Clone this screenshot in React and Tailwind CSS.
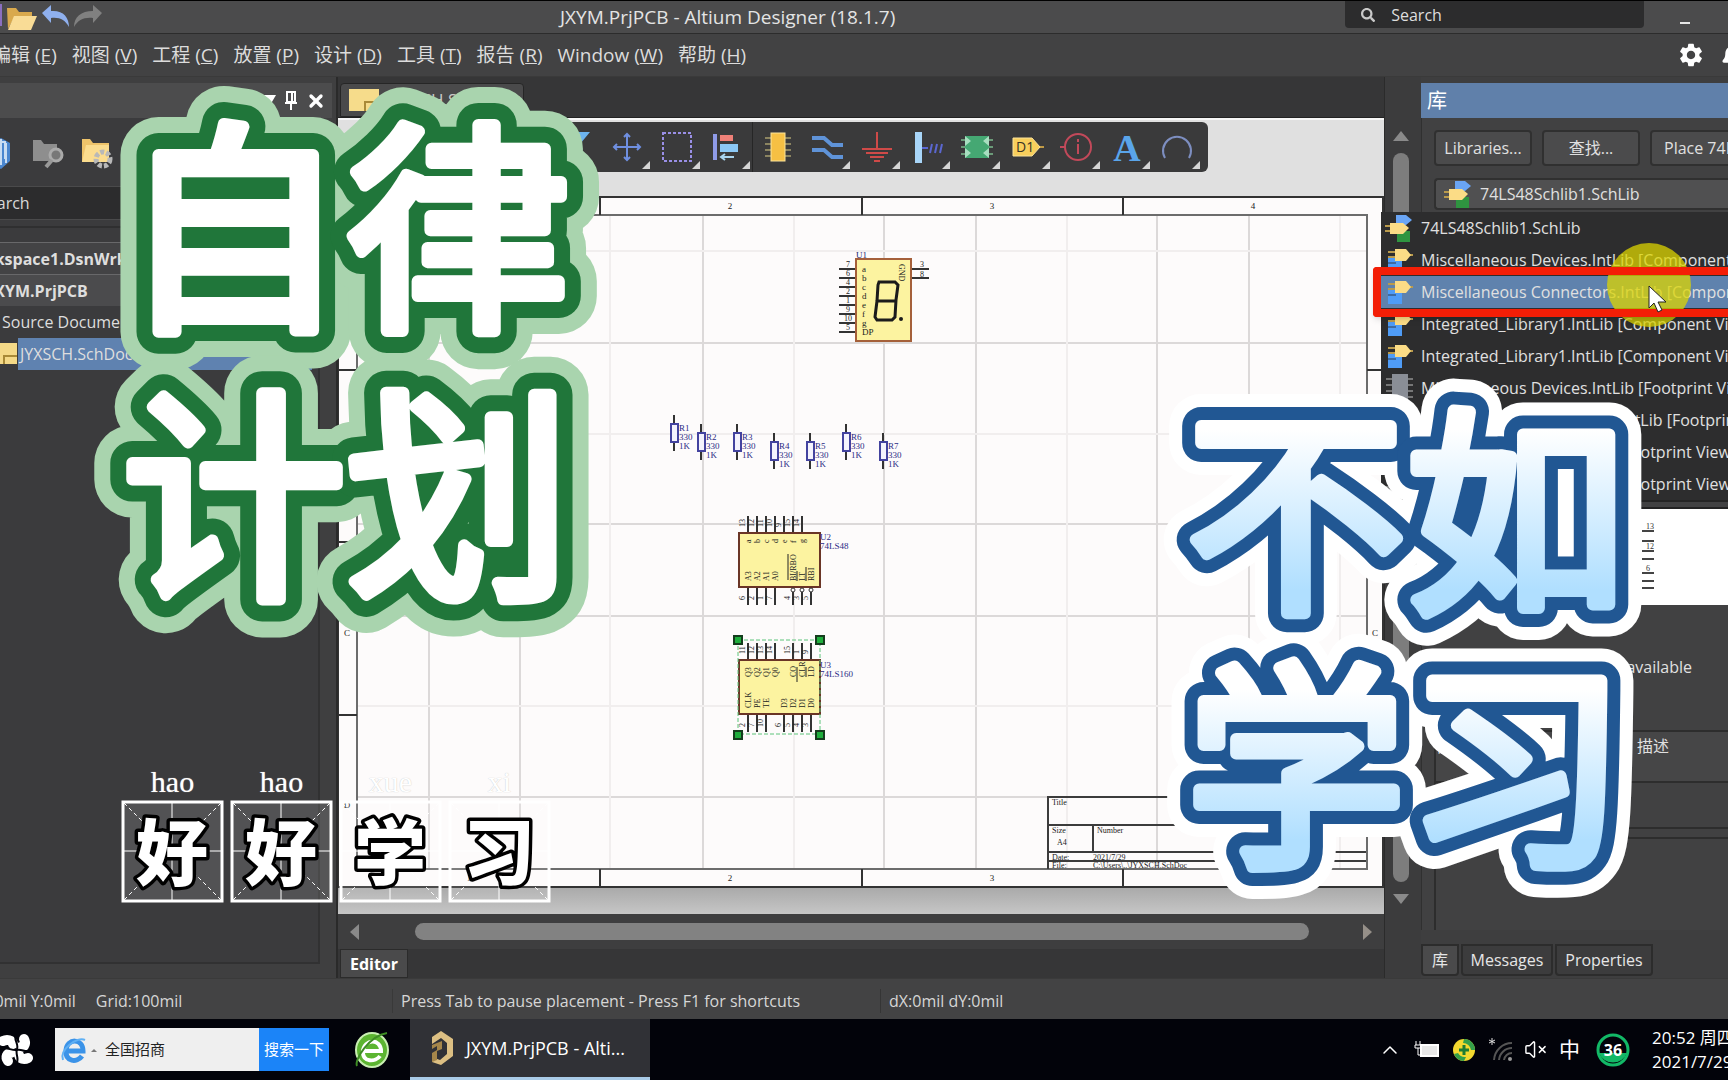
import React from 'react';
import { FaBell, FaSearch } from 'react-icons/fa';
import { MdSettings } from 'react-icons/md';
import { ChevronUp, VolumeX, X } from 'lucide-react';

const MENUS = [
  ['编辑', 'E'],
  ['视图', 'V'],
  ['工程', 'C'],
  ['放置', 'P'],
  ['设计', 'D'],
  ['工具', 'T'],
  ['报告', 'R'],
  ['Window', 'W'],
  ['帮助', 'H'],
];

const LIBRARIES = [
  { name: '74LS48Schlib1.SchLib', kind: 'sch' },
  { name: 'Miscellaneous Devices.IntLib [Component View]', kind: 'int' },
  { name: 'Miscellaneous Connectors.IntLib [Component View]', kind: 'int', active: true },
  { name: 'Integrated_Library1.IntLib [Component View]', kind: 'int' },
  { name: 'Integrated_Library1.IntLib [Component View]', kind: 'int' },
  { name: 'Miscellaneous Devices.IntLib [Footprint View]', kind: 'foot' },
  { name: 'Miscellaneous Connectors.IntLib [Footprint View]', kind: 'foot' },
  { name: 'Integrated_Library1.IntLib [Footprint View]', kind: 'foot' },
  { name: 'Integrated_Library1.IntLib [Footprint View]', kind: 'foot' },
];

const RESISTORS = [
  { id: 'R1', x: 671, y: 424 },
  { id: 'R2', x: 698, y: 433 },
  { id: 'R3', x: 734, y: 433 },
  { id: 'R4', x: 771, y: 442 },
  { id: 'R5', x: 807, y: 442 },
  { id: 'R6', x: 843, y: 433 },
  { id: 'R7', x: 880, y: 442 },
];

const LibIcon = ({ kind }) => (
  <svg width="28" height="30" viewBox="0 0 28 30" className="shrink-0">
    {kind === 'sch' && (
      <>
        <path d="M11 2h10l6 5-6 5H11z" fill="#6aa5f5" />
        <rect x="12" y="18" width="13" height="11" fill="#2f9440" />
        <path d="M0 13h6M0 18h6" stroke="#b99a4c" strokeWidth="2" />
        <path d="M5 10h13l6 5-6 6H5z" fill="#fbdc86" />
      </>
    )}
    {kind === 'int' && (
      <>
        <path d="M3 13h14v14H3z" fill="#4f9cf7" />
        <path d="M3 18h8" stroke="#2d3a50" />
        <path d="M3 7h9M3 12h9M22 10h6" stroke="#b99a4c" strokeWidth="2" />
        <path d="M10 4h11l5 6-5 6H10z" fill="#fbdc86" />
      </>
    )}
    {kind === 'foot' && (
      <>
        <path d="M1 6h27M1 12h27M1 18h27M1 24h27" stroke="#777" strokeWidth="2" />
        <rect x="7" y="1" width="16" height="28" fill="#8a8e96" />
      </>
    )}
  </svg>
);

const TOOLS = [
  { label: 'Filter', draw: <path d="M4 2h26L20 14v14h-6V14z" fill="#6db4ef" /> },
  { label: 'Move', draw: <path d="M17 5v24M5 17h24M14 7l3-3 3 3M14 27l3 3 3-3M7 14l-3 3 3 3M27 14l3 3-3 3" fill="none" stroke="#6f8fe0" strokeWidth="2" />, more: true },
  { label: 'Select', draw: <rect x="3" y="3" width="28" height="28" fill="none" stroke="#9a8fe6" strokeWidth="2" strokeDasharray="3 2" />, more: true },
  {
    label: 'Align',
    more: true,
    draw: (
      <>
        <path d="M5 4v26" stroke="#8f9be8" strokeWidth="4" />
        <rect x="10" y="5" width="13" height="6" fill="#ee8078" />
        <rect x="10" y="14" width="18" height="8" fill="#8cc8f5" />
        <path d="M24 27H12M15 24l-4 3 4 3" fill="none" stroke="#a9d4ee" strokeWidth="2" />
      </>
    ),
  },
  {
    label: 'Part',
    line: true,
    draw: (
      <>
        <path d="M4 8h26M4 14h26M4 20h26M4 26h26" stroke="#8b8460" strokeWidth="2" />
        <rect x="10" y="3" width="14" height="28" fill="#f6c044" stroke="#fbe39a" />
      </>
    ),
  },
  { label: 'Wire', more: true, draw: <path d="M2 8h12l8 7h11M2 20h12l8 7h11" fill="none" stroke="#5f93d8" strokeWidth="4" /> },
  { label: 'Power', more: true, draw: <path d="M17 2v17M2 19h30M6 23h22M10 27h14M14 31h6" fill="none" stroke="#cf4a48" strokeWidth="2" /> },
  {
    label: 'Harness',
    more: true,
    draw: (
      <>
        <rect x="5" y="2" width="7" height="31" fill="#a8d5f8" />
        <path d="M12 18h6M20 23l2-9M25 23l2-9M30 23l2-9" stroke="#5b67d0" strokeWidth="2" />
      </>
    ),
  },
  {
    label: 'Sheet',
    more: true,
    draw: (
      <>
        <path d="M1 10h32M1 17h32M1 24h32" stroke="#6b9a78" strokeWidth="2" />
        <rect x="5" y="6" width="24" height="22" fill="#45a873" />
        <path d="M5 6l6 5-6 5zM29 6l-6 5 6 5zM5 18l6 5-6 5zM29 18l-6 5 6 5z" fill="#a8dec0" />
      </>
    ),
  },
  {
    label: 'Port',
    more: true,
    draw: (
      <>
        <path d="M28 17h6" stroke="#c09a45" strokeWidth="2" />
        <path d="M3 8h19l8 9-8 9H3z" fill="#f8cf5c" stroke="#fbe39a" />
        <text x="6" y="22" fontSize="14" fill="#3a3325">D1</text>
      </>
    ),
  },
  {
    label: 'Directive',
    more: true,
    draw: (
      <>
        <circle cx="18" cy="17" r="13" fill="none" stroke="#c2495a" strokeWidth="2" />
        <path d="M0 17h5M18 14v10M18 9v3" stroke="#c2495a" strokeWidth="2" />
      </>
    ),
  },
  { label: 'Text', more: true, draw: <text x="17" y="31" fontSize="38" fontWeight="700" textAnchor="middle" fill="#5aa5ea" fontFamily="Liberation Serif, serif">A</text> },
  { label: 'Arc', more: true, draw: <path d="M5 28A14 14 0 1 1 29 28" fill="none" stroke="#7d8ec0" strokeWidth="2" /> },
];

const TitleBar = () => (
  <header className="relative flex h-[34px] items-center border-t border-b border-t-black border-b-[#2c2c2c] bg-[#4b4b4c]">
    <svg width="110" height="32" viewBox="0 0 110 32" className="shrink-0">
      <path d="M0 3h2v22H0z" fill="#8a6fc0" />
      <path d="M7 7h9l3 4h13v4H15L8 28z" fill="#d9a94d" />
      <path d="M14 15h23l-6 14H8z" fill="#f9dc96" />
      <path d="M42 12l9-8v6c12-1 18 6 18 16-4-7-9-10-18-9v5z" fill="#8fb0ee" />
      <path d="M102 12l-9-8v6c-12 0-19 6-19 16 4-7 10-10 19-9v5z" fill="#808080" />
    </svg>
    <h1 className="absolute left-[560px] text-[19px] text-[#e4e4e4]">JXYM.PrjPCB - Altium Designer (18.1.7)</h1>
    <label className="mr-[84px] ml-auto flex h-[27px] w-[299px] items-center gap-4 self-start rounded-b bg-[#2c2c2d] px-4 text-[#c9c9c9]">
      <FaSearch size={16} aria-label="Search" />
      <input className="w-full bg-transparent text-[16px] outline-none placeholder:text-[#dedede]" placeholder="Search" />
    </label>
    <button aria-label="Minimize" className="absolute right-[38px] bottom-[9px] h-[2px] w-[10px] bg-[#e6e6e6]" />
  </header>
);

const MenuBar = () => (
  <nav className="flex h-[43px] items-center border-b border-[#3a3a3a] bg-[#424243] text-[19px] text-[#dcdcdc]">
    <div className="-ml-2 flex gap-[15px] whitespace-nowrap">
      {MENUS.map(([name, key]) => (
        <button key={key}>
          {name} (<u>{key}</u>)
        </button>
      ))}
    </div>
    <button aria-label="Settings" className="ml-auto text-white">
      <MdSettings size={28} />
    </button>
    <button aria-label="Notifications" className="-mr-4 ml-4 text-white">
      <FaBell size={23} />
    </button>
  </nav>
);

const ProjectsPanel = () => (
  <aside className="flex w-[338px] shrink-0 flex-col overflow-hidden border-r-2 border-[#2a2a2a] bg-[#3f3f40] pt-1.5">
    <div className="mr-1 flex h-[35px] items-center justify-end gap-2 bg-[#4c4c4d] pr-1.5 text-white">
      <button aria-label="Panel menu" className="h-0 w-0 border-x-[7px] border-t-[12px] border-x-transparent border-t-white" />
      <button aria-label="Pin">
        <svg width="14" height="20" viewBox="0 0 14 20">
          <path d="M3 1h8v10H3zM1 12h12M7 12v7M8 2v9" fill="none" stroke="#fff" strokeWidth="2" />
        </svg>
      </button>
      <button aria-label="Close">
        <X size={20} strokeWidth={4} />
      </button>
    </div>
    <div className="mr-4 mb-3.5 flex flex-1 flex-col border-r-2 border-b-2 border-[#313132] bg-[#3b3b3d]">
      <div className="h-[68px] pt-3">
        <svg width="160" height="44" viewBox="0 0 160 44">
          <path d="M-8 13L1 8l9 5v18l-9 8-9-5z" fill="#4a86cf" />
          <path d="M-4 12h9v17M1 9v26M6 13v20" fill="none" stroke="#c8dcf2" strokeWidth="2" />
          <path d="M33 10h8l3 4h13v17H33z" fill="#8e8e8e" />
          <circle cx="56" cy="25" r="6" fill="#777" stroke="#aaa" strokeWidth="3" />
          <path d="M52 30l-6 7" stroke="#999" strokeWidth="4" />
          <path d="M82 9h8l3 4h16v19H82z" fill="#eec36a" />
          <path d="M86 15h23v17H82z" fill="#fbdc8e" />
          <circle cx="103" cy="29" r="7" fill="none" stroke="#b8b8b8" strokeWidth="5" strokeDasharray="4 2" />
        </svg>
      </div>
      <label className="flex h-[34px] items-center border-y border-[#4a4a4b] bg-[#2c2c2d]">
        <input aria-label="Search projects" className="-ml-[21px] w-full bg-transparent text-[16px] outline-none placeholder:text-[#d8d8d8]" placeholder="Search" />
      </label>
      <div className="mt-1.5 h-4 border-t-2 border-[#2f2f30]" />
      <ul className="text-[16px] whitespace-nowrap text-[#dedede]">
        <li className="flex h-8 items-center overflow-hidden border-t border-[#68686a] bg-[#434345] font-bold">
          <span className="-ml-[38px]">Workspace1.DsnWrk</span>
        </li>
        <li className="flex h-8 items-center overflow-hidden border-t border-[#68686a] bg-[#4b4b4d] font-bold">
          <span className="-ml-[11px]">JXYM.PrjPCB</span>
        </li>
        <li className="flex h-8 items-center pl-0.5">Source Documents</li>
        <li className="mr-[6px] flex h-8 items-center">
          <svg width="18" height="32" viewBox="0 0 18 32" className="shrink-0">
            <path d="M0 5h17v21H0z" fill="#f4d987" />
            <path d="M4 26v-8h13" fill="none" stroke="#a98a37" strokeWidth="2" />
          </svg>
          <span className="flex h-full flex-1 items-center bg-[#5f82b0] pl-0.5">JYXSCH.SchDoc</span>
        </li>
      </ul>
    </div>
  </aside>
);

const PinRow = ({ xs, from, to }) => (
  <path d={xs.map((x) => `M${x} ${from}V${to}`).join('')} stroke="#333" strokeWidth="2" />
);

const VerticalLabels = ({ items, y }) => (
  <g fontSize="8" fill="#222" fontFamily="Liberation Serif, serif">
    {items.map(([x, t]) => (
      <text key={x} transform={`translate(${x + 3} ${y}) rotate(-90)`}>{t}</text>
    ))}
  </g>
);

const Schematic = () => (
  <svg viewBox="338 118 1046 796" preserveAspectRatio="xMinYMin slice" className="absolute inset-0 h-full w-full" fontFamily="Liberation Serif, serif">
    <defs>
      <linearGradient id="desk" x1="0" y1="0" x2="0" y2="1">
        <stop offset="0" stopColor="#a9a9a9" />
        <stop offset="1" stopColor="#c6c6c6" />
      </linearGradient>
    </defs>
    <rect x="338" y="118" width="1046" height="80" fill="#e0e0e0" />
    <rect x="338" y="118" width="1046" height="2" fill="#f6f6f6" />
    <rect x="338" y="887" width="1046" height="27" fill="url(#desk)" />
    <rect x="338" y="197" width="1045" height="690" fill="#fdfbfb" stroke="#333" strokeWidth="2" />
    <path d="M429 216V868M520 216V868M703 216V868M884 216V868M976 216V868M1157 216V868M1249 216V868M357 343H1366M357 524H1366M357 616H1366M357 797H1048" stroke="#dcd9d9" strokeWidth="2" />
    <path d="M610 216V868M794 216V868M1067 216V868M1340 216V868M357 251H1366M357 434H1366M357 706H1366" stroke="#f1eeee" strokeWidth="2" />
    <rect x="357" y="215" width="1010" height="654" fill="none" stroke="#6c6c6c" strokeWidth="2" />
    <path d="M600 197v18M862 197v18M1123 197v18M600 869v18M862 869v18M1123 869v18M338 370h19M1367 370h16M338 542h19M1367 542h16M338 715h19M1367 715h16" stroke="#333" strokeWidth="2" />
    <g fontSize="9" fill="#222" textAnchor="middle">
      <text x="730" y="209">2</text>
      <text x="992" y="209">3</text>
      <text x="1253" y="209">4</text>
      <text x="469" y="881">1</text>
      <text x="730" y="881">2</text>
      <text x="992" y="881">3</text>
      <text x="347" y="636">C</text>
      <text x="1375" y="636">C</text>
      <text x="347" y="808">D</text>
    </g>

    {/* seven segment display */}
    <text x="856" y="258" fontSize="9" fill="#22226a">U1</text>
    <path d="M839 269h17M839 278h17M839 287h17M839 296h17M839 305h17M839 314h17M839 323h17M839 332h17M911 269h18M911 278h18" stroke="#333" strokeWidth="2" />
    <rect x="856" y="259" width="55" height="82" fill="#fcf3a0" stroke="#a5603a" strokeWidth="2" />
    <g fontSize="9" fill="#222">
      {['a', 'b', 'c', 'd', 'e', 'f', 'g', 'DP'].map((t, i) => (
        <text key={t} x="862" y={272 + i * 9}>{t}</text>
      ))}
      {['7', '6', '4', '2', '1', '9', '10', '5'].map((t, i) => (
        <text key={t} x="848" y={267 + i * 9} fontSize="8" textAnchor="middle">{t}</text>
      ))}
      <text x="920" y="267" fontSize="8">3</text>
      <text x="920" y="277" fontSize="8">8</text>
      <text transform="translate(899 264) rotate(90)" fontSize="8">GND</text>
    </g>
    <path d="M879 282h16l3 3-2 15-1 17-3 3h-15l-2-3 2-16 1-16zM877 301h19" fill="none" stroke="#1b1b1b" strokeWidth="3" />
    <circle cx="901" cy="319" r="2" fill="#1b1b1b" />

    {RESISTORS.map((r) => (
      <g key={r.id}>
        <path d={`M${r.x + 3} ${r.y - 9}v9M${r.x + 3} ${r.y + 18}v9`} stroke="#333" strokeWidth="2" />
        <rect x={r.x} y={r.y} width="7" height="18" fill="#f4f3fd" stroke="#43439f" strokeWidth="2" />
        <g fontSize="9" fill="#2c2c86">
          <text x={r.x + 8} y={r.y + 7}>{r.id}</text>
          <text x={r.x + 8} y={r.y + 16}>330</text>
          <text x={r.x + 8} y={r.y + 25}>1K</text>
        </g>
      </g>
    ))}

    {/* decoder */}
    <PinRow xs={[748, 757, 766, 775, 784, 793, 802]} from={516} to={533} />
    <PinRow xs={[748, 757, 766, 775, 793, 802, 811]} from={587} to={605} />
    <rect x="739" y="533" width="81" height="54" fill="#fcf3a0" stroke="#6a3526" strokeWidth="2" />
    <VerticalLabels y={543} items={[[748, 'a'], [757, 'b'], [766, 'c'], [775, 'd'], [784, 'e'], [793, 'f'], [802, 'g']]} />
    <VerticalLabels y={581} items={[[748, 'A3'], [757, 'A2'], [766, 'A1'], [775, 'A0'], [793, 'BI/RBO'], [802, 'LT'], [811, 'RBI']]} />
    <VerticalLabels y={527} items={[[742, '13'], [751, '12'], [760, '11'], [769, '10'], [778, '9'], [787, '15'], [796, '14']]} />
    <VerticalLabels y={600} items={[[742, '6'], [751, '2'], [760, '1'], [769, '7'], [787, '4'], [796, '3'], [805, '5']]} />
    <path d="M788 554v26M797 571v10M806 567v14" stroke="#222" />
    <g fill="#fff" stroke="#333">
      <circle cx="793" cy="590" r="2" />
      <circle cx="802" cy="590" r="2" />
      <circle cx="811" cy="590" r="2" />
    </g>
    <g fontSize="9" fill="#2c2c86">
      <text x="820" y="540">U2</text>
      <text x="820" y="549">74LS48</text>
      <text x="820" y="668">U3</text>
      <text x="820" y="677">74LS160</text>
    </g>

    {/* counter, selected */}
    <PinRow xs={[748, 757, 766, 775, 793, 802, 811]} from={643} to={660} />
    <PinRow xs={[748, 757, 766, 784, 793, 802, 811]} from={714} to={732} />
    <rect x="739" y="660" width="81" height="54" fill="#fcf3a0" stroke="#6a3526" strokeWidth="2" />
    <VerticalLabels y={677} items={[[748, 'Q3'], [757, 'Q2'], [766, 'Q1'], [775, 'Q0'], [793, 'CO'], [802, 'CLR'], [811, 'LD']]} />
    <VerticalLabels y={708} items={[[748, 'CLK'], [757, 'PE'], [766, 'TE'], [784, 'D3'], [793, 'D2'], [802, 'D1'], [811, 'D0']]} />
    <VerticalLabels y={654} items={[[742, '11'], [751, '12'], [760, '13'], [769, '14'], [787, '15'], [796, '1'], [805, '9']]} />
    <VerticalLabels y={727} items={[[742, '2'], [751, '7'], [760, '10'], [778, '6'], [787, '5'], [796, '4'], [805, '3']]} />
    <path d="M797 667v15M806 667v10" stroke="#222" />
    <rect x="738" y="640" width="82" height="94" fill="none" stroke="#5cc47a" strokeDasharray="4 2" />
    <g fill="#1fae3c" stroke="#153d1d" strokeWidth="2">
      <rect x="734" y="636" width="8" height="8" />
      <rect x="816" y="636" width="8" height="8" />
      <rect x="734" y="731" width="8" height="8" />
      <rect x="816" y="731" width="8" height="8" />
    </g>

    {/* title block */}
    <path d="M1048 869V797H1366M1048 825H1366M1048 852H1366M1048 861H1366M1093 825V852" fill="none" stroke="#3c3c3c" strokeWidth="2" />
    <g fontSize="8" fill="#222">
      <text x="1052" y="805">Title</text>
      <text x="1052" y="833">Size</text>
      <text x="1057" y="845">A4</text>
      <text x="1097" y="833">Number</text>
      <text x="1052" y="860">Date:</text>
      <text x="1093" y="860">2021/7/29</text>
      <text x="1052" y="868">File:</text>
      <text x="1093" y="868">C:\Users\..\JYXSCH.SchDoc</text>
    </g>
  </svg>
);

const Editor = () => (
  <main className="flex min-w-0 flex-1 flex-col bg-[#363637]">
    <div className="flex h-[41px] items-end border-b border-[#222]">
      <button className="ml-0.5 flex h-[34px] w-[184px] items-center gap-2 rounded-t border border-[#262626] bg-[#4a4a4b] px-2 text-[17px] whitespace-nowrap text-[#c9c9c9]">
        <svg width="30" height="22" viewBox="0 0 30 22" className="shrink-0">
          <path d="M0 0h30v22H0z" fill="#f6dc8b" />
          <path d="M16 22v-9h14" fill="none" stroke="#a98a37" strokeWidth="2" />
        </svg>
        JYXSCH.SchDoc *
      </button>
    </div>
    <div className="relative flex-1 overflow-hidden bg-[#e0e0e0]">
      <Schematic />
      <div className="absolute top-1 right-[176px] flex h-[50px] rounded-md bg-[#3a3a3b] px-1.5">
        {TOOLS.map((tool) => (
          <button key={tool.label} aria-label={tool.label} className={`relative flex w-[50px] justify-center pt-2 ${tool.line ? 'border-l border-[#262626]' : ''}`}>
            <svg width="34" height="34" viewBox="0 0 34 34">{tool.draw}</svg>
            {tool.more && <i className="absolute right-0.5 bottom-[3px] h-0 w-0 border-b-[8px] border-l-[8px] border-b-[#d5d5d5] border-l-transparent" />}
          </button>
        ))}
      </div>
    </div>
    <div className="flex h-[35px] items-center justify-between bg-[#3e3e3f] px-3">
      <i className="h-0 w-0 border-y-[8px] border-r-[9px] border-y-transparent border-r-[#8a8a8a]" />
      <div className="mr-[54px] ml-[56px] h-[17px] flex-1 rounded-full bg-[#828282]" />
      <i className="h-0 w-0 border-y-[8px] border-l-[9px] border-y-transparent border-l-[#958f88]" />
    </div>
    <div className="h-[29px]">
      <button className="ml-0.5 h-full w-[68px] border border-[#2b2b2b] bg-[#4a4a4b] text-[16px] font-bold text-white">Editor</button>
    </div>
  </main>
);

const LibraryDropdown = () => (
  <div className="absolute top-[135px] right-0 -left-[3px] border-b-2 border-[#242424] bg-[#2d2d2e]">
    <ul className="overflow-hidden text-[16px] whitespace-nowrap text-[#e0e0e0]">
      {LIBRARIES.map((lib, i) => (
        <li key={i} className={`flex h-8 items-center gap-2 pl-1 ${lib.active ? 'bg-[#5f82ad]' : ''}`}>
          <LibIcon kind={lib.kind} />
          {lib.name}
        </li>
      ))}
    </ul>
    <div className="absolute top-[31px] right-[37px] h-[84px] w-[84px] rounded-full bg-[#dcd400] opacity-75" />
    <div className="absolute top-[55px] right-0 -left-2 h-[50px] rounded-l-sm border-y-8 border-l-8 border-[#f31e06] shadow-md" />
    <svg width="20" height="28" viewBox="0 0 20 28" className="absolute top-[73px] right-[60px]">
      <path d="M1 1v22l5-5 4 9 4-2-4-8h8z" fill="#fff" stroke="#222" />
    </svg>
  </div>
);

const LibraryPanel = () => (
  <aside className="relative flex w-[344px] shrink-0 bg-[#3e3e3f]">
    <div className="flex w-[37px] flex-col items-center border-l border-[#2b2b2b] bg-[#3c3c3d] pt-[54px] pr-1 pb-[74px]">
      <i className="h-0 w-0 border-x-[8px] border-b-[10px] border-x-transparent border-b-[#8a8a8a]" />
      <div className="my-3 w-4 flex-1 rounded-full bg-[#7d7d7d]" />
      <i className="h-0 w-0 border-x-[8px] border-t-[10px] border-x-transparent border-t-[#8a8a8a]" />
    </div>
    <div className="flex min-w-0 flex-1 flex-col overflow-hidden pt-1.5">
      <h2 className="flex h-[35px] shrink-0 items-center bg-[#6080aa] pl-1.5 text-[20px] text-white">库</h2>
      <div className="flex flex-1 flex-col border-l border-[#303030] bg-[#414142] pl-3 text-[16px] text-[#e0e0e0]">
        <div className="mt-3 flex gap-[10px] whitespace-nowrap">
          <button className="h-9 w-[98px] shrink-0 rounded border-2 border-[#303030] bg-[#4b4b4c]">Libraries...</button>
          <button className="h-9 w-[98px] shrink-0 rounded border-2 border-[#303030] bg-[#4b4b4c]">查找...</button>
          <button className="h-9 w-[160px] shrink-0 rounded border-2 border-[#303030] bg-[#4b4b4c] pl-3 text-left">Place 74LS48</button>
        </div>
        <button className="mt-3 flex h-8 items-center gap-2 rounded-l border-2 border-r-0 border-[#303030] bg-[#505051] pl-2 text-left">
          <LibIcon kind="sch" />
          74LS48Schlib1.SchLib
        </button>
        <div className="mt-[297px] h-[98px] border-t-2 border-[#222] bg-white">
          <svg width="295" height="96" viewBox="0 0 295 96">
            <path d="M208 22h12M208 32h12M208 42h12M208 50h12M208 64h12M208 72h12M208 79h12" stroke="#444" strokeWidth="2" />
            <g fontSize="8" fill="#333" fontFamily="Liberation Serif, serif">
              <text x="212" y="20">13</text>
              <text x="212" y="40">12</text>
              <text x="212" y="62">6</text>
            </g>
          </svg>
        </div>
        <p className="mt-[50px] pr-9 text-right">No preview available</p>
        <table className="mt-[51px] w-full text-left">
          <thead>
            <tr className="h-[51px] border-2 border-r-0 border-[#2d2d2d] bg-[#464647] align-top text-[16px]">
              <th className="w-[202px] pt-0.5 font-normal">供应商</th>
              <th className="pt-0.5 font-normal">描述</th>
            </tr>
          </thead>
          <tbody>
            <tr className="h-[46px] border-y-2 border-l-2 border-[#2d2d2d]">
              <td />
              <td />
            </tr>
          </tbody>
        </table>
        <div className="mt-2 flex-1 border-t-2 border-l-2 border-[#2d2d2d]" />
      </div>
      <div className="mt-3.5 mb-0.5 flex h-8 shrink-0 gap-0.5 text-[16px] text-[#e6e6e6]">
        <button className="w-[38px] rounded-b border-2 border-[#2c2c2c] bg-[#4a4a4b]">库</button>
        <button className="w-[92px] rounded-b border-2 border-[#2c2c2c] bg-[#3c3c3d]">Messages</button>
        <button className="w-[98px] rounded-b border-2 border-[#2c2c2c] bg-[#3c3c3d]">Properties</button>
      </div>
    </div>
    <LibraryDropdown />
  </aside>
);

const StatusBar = () => (
  <div className="flex h-[41px] items-center overflow-hidden border-t border-[#3a3a3a] bg-[#434344] pt-1 text-[16px] whitespace-nowrap text-[#d6d6d6]">
    <div className="-ml-[19px] flex w-[411px] shrink-0 gap-5">
      <span>X:0mil Y:0mil</span>
      <span>Grid:100mil</span>
    </div>
    <span className="w-[488px] border-l border-[#393939] pl-2">Press Tab to pause placement - Press F1 for shortcuts</span>
    <span className="border-l border-[#353535] pl-2">dX:0mil dY:0mil</span>
  </div>
);

const Taskbar = () => (
  <footer className="flex h-[61px] items-center overflow-hidden bg-[#02030a] text-white">
    <svg width="34" height="36" viewBox="0 0 34 36" className="shrink-0">
      <g fill="none" stroke="#fff" strokeWidth="10" strokeLinecap="round">
        <path d="M3 9c4-2 9-1 10 3" />
        <path d="M24 7c2 4 1 8-3 8" />
        <path d="M28 26c-4 2-8 1-9-3" />
        <path d="M8 29c-3-4-1-8 3-8" />
      </g>
      <path d="M0 17c7-3 11 2 17 1s8 3 16 0M16 2c-3 6 3 9 1 15s3 9-1 17" fill="none" stroke="#02030a" strokeWidth="2" />
    </svg>
    <form className="ml-[21px] flex h-[43px] w-[274px] shrink-0 bg-[#efefef]">
      <svg width="50" height="43" viewBox="0 0 50 43" className="shrink-0">
        <path d="M11 23h17c0-13-16-13-17-1s11 13 16 6" fill="none" stroke="#3b93e8" strokeWidth="5" />
        <path d="M8 32c-4-10 14-24 22-20" fill="none" stroke="#5fb0f4" strokeWidth="2" />
        <path d="M36 24l3-3 3 3z" fill="#777" />
      </svg>
      <input aria-label="Search the web" defaultValue="全国招商" className="w-full min-w-0 flex-1 bg-transparent text-[15px] text-[#222] outline-none" />
      <button type="button" className="w-[70px] bg-[#1b84f8] text-[15px] text-white">搜索一下</button>
    </form>
    <svg width="36" height="40" viewBox="0 0 36 40" className="mr-5 ml-[25px] shrink-0">
      <ellipse cx="18" cy="20" rx="16" ry="17" fill="#5cb531" stroke="#c9efb2" strokeWidth="2" />
      <path d="M9 21h18c0-13-17-12-18 0s13 11 17 5" fill="none" stroke="#fff" strokeWidth="4" />
      <path d="M3 36c-3-6 12-30 30-33" fill="none" stroke="#3e8d25" strokeWidth="2" />
    </svg>
    <button className="flex h-full w-[240px] items-center gap-2.5 border-b-3 border-[#a9cbe8] bg-[#303136] pl-5 text-[18px] whitespace-nowrap">
      <svg width="26" height="36" viewBox="0 0 26 36">
        <path d="M2 7l9-6 12 8v17l-12 9-9-3v-5l8 3 7-6V13l-6-5-9 6z" fill="#dcbf83" />
        <path d="M2 15l10-4v8l-5 2v9l-5 2v-9l5-3v-4l-5 3z" fill="#a5864a" />
      </svg>
      JXYM.PrjPCB - Alti...
    </button>
    <div className="ml-auto flex shrink-0 items-center">
      <ChevronUp size={24} strokeWidth={1.5} />
      <svg width="26" height="24" viewBox="0 0 26 24" className="ml-3">
        <path d="M7 7h17v11H7z" fill="#e8e8e8" stroke="#fff" strokeWidth="2" />
        <path d="M2 3v4M6 3v4M1 7h6v3H1zM4 10v7h4" fill="none" stroke="#fff" strokeWidth="1" />
      </svg>
      <svg width="24" height="24" viewBox="0 0 24 24" className="ml-3">
        <circle cx="12" cy="12" r="11" fill="#f3d92f" />
        <path d="M12 1a11 11 0 0 1 11 11h-4a8 8 0 0 0-8-7zM12 23A11 11 0 0 1 2 16l4-1a8 8 0 0 0 8 4z" fill="#34a04a" />
        <path d="M12 7v10M7 12h10" stroke="#1d7c33" strokeWidth="3" />
      </svg>
      <svg width="26" height="26" viewBox="0 0 26 26" className="ml-3">
        <path d="M4 1v7M1 3l6 3M7 3L1 6" stroke="#ddd" />
        <path d="M6 23A18 18 0 0 1 24 6M11 23a13 13 0 0 1 13-12M16 23a8 8 0 0 1 8-7" fill="none" stroke="#555" strokeWidth="2" />
        <circle cx="22" cy="22" r="2" fill="#999" />
      </svg>
      <VolumeX size={23} strokeWidth={1.5} className="ml-2.5" />
      <span className="ml-3 text-[21px]">中</span>
      <svg width="34" height="34" viewBox="0 0 34 34" className="ml-4">
        <path d="M3 20a15 15 0 0 0 28 0z" fill="#12b866" />
        <circle cx="17" cy="17" r="15" fill="none" stroke="#12b866" strokeWidth="3" />
        <text x="17" y="23" fontSize="16" fontWeight="700" textAnchor="middle" fill="#fff">36</text>
      </svg>
      <div className="ml-[22px] w-[76px] overflow-hidden text-[17px] leading-6 whitespace-nowrap">
        <div>20:52 周四</div>
        <div>2021/7/29</div>
      </div>
    </div>
  </footer>
);

// one caption drawn three times: outer halo, outline, then the face on top
const Caption = ({ lines, size, halo, outline, haloWidth, outlineWidth, fills }) => {
  const layers = [
    { width: haloWidth, paint: () => halo },
    { width: outlineWidth, paint: () => outline },
    { width: 12, paint: (i) => fills[i] },
  ];
  return (
    <g fontSize={size} fontWeight="400" strokeLinejoin="round">
      {layers.map((layer, n) => (
        <g key={n} strokeWidth={layer.width} aria-hidden={n < 2}>
          {lines.map((line, i) => (
            <text key={line.text} x={line.x} y={line.y} fill={layer.paint(i)} stroke={layer.paint(i)}>
              {line.text}
            </text>
          ))}
        </g>
      ))}
    </g>
  );
};

const Stickers = () => (
  <svg viewBox="0 0 1728 1080" preserveAspectRatio="xMinYMin meet" className="pointer-events-none absolute inset-0 h-full w-full">
    <defs>
      <linearGradient id="sky1" gradientUnits="userSpaceOnUse" x1="0" y1="430" x2="0" y2="590">
        <stop offset="0" stopColor="#fff" />
        <stop offset="1" stopColor="#b0dfff" />
      </linearGradient>
      <linearGradient id="sky2" gradientUnits="userSpaceOnUse" x1="0" y1="690" x2="0" y2="840">
        <stop offset="0" stopColor="#fff" />
        <stop offset="1" stopColor="#b0dfff" />
      </linearGradient>
    </defs>
    <Caption
      size={224}
      halo="#a9d4ae"
      outline="#20763a"
      haloWidth={76}
      outlineWidth={44}
      fills={['#fff', '#fff']}
      lines={[
        { text: '自律', x: 122, y: 313 },
        { text: '计划', x: 122, y: 581 },
      ]}
    />
    <Caption
      size={220}
      halo="#fff"
      outline="#215793"
      haloWidth={64}
      outlineWidth={38}
      fills={['url(#sky1)', 'url(#sky2)']}
      lines={[
        { text: '不如', x: 1186, y: 596 },
        { text: '学习', x: 1186, y: 850 },
      ]}
    />
  </svg>
);

const PRACTICE = [
  { pinyin: 'hao', char: '好' },
  { pinyin: 'hao', char: '好' },
  { pinyin: 'xue', char: '学' },
  { pinyin: 'xi', char: '习' },
];

const PracticeGrid = () => (
  <div className="pointer-events-none absolute top-[764px] left-[121px] flex gap-1.5">
    {PRACTICE.map((item, i) => (
      <div key={i} className="flex flex-col items-center">
        <span className="font-['Liberation_Serif',serif] text-[30px] leading-9 text-white [text-shadow:0_0_1px_#bbb]">{item.pinyin}</span>
        <svg width="103" height="103" viewBox="0 0 103 103">
          <rect x="2" y="2" width="99" height="99" fill="#fff" fillOpacity="0.12" stroke="#fff" strokeWidth="3" />
          <path d="M2 51h99M51 2v99" stroke="#fff" />
          <path d="M3 3l97 97M100 3L3 100" stroke="#fff" strokeDasharray="4 3" />
          <text x="51" y="79" fontSize="72" fontWeight="900" textAnchor="middle" fill="#fff" stroke="#000" strokeWidth="7" strokeLinejoin="round" paintOrder="stroke">
            {item.char}
          </text>
        </svg>
      </div>
    ))}
  </div>
);

export default function App() {
  return (
    <div className="relative flex min-h-screen flex-col overflow-hidden bg-[#3e3e3f] font-['Open_Sans','Noto_Sans_CJK_SC',sans-serif]">
      <TitleBar />
      <MenuBar />
      <div className="flex flex-1">
        <ProjectsPanel />
        <Editor />
        <LibraryPanel />
      </div>
      <StatusBar />
      <Taskbar />
      <Stickers />
      <PracticeGrid />
    </div>
  );
}
